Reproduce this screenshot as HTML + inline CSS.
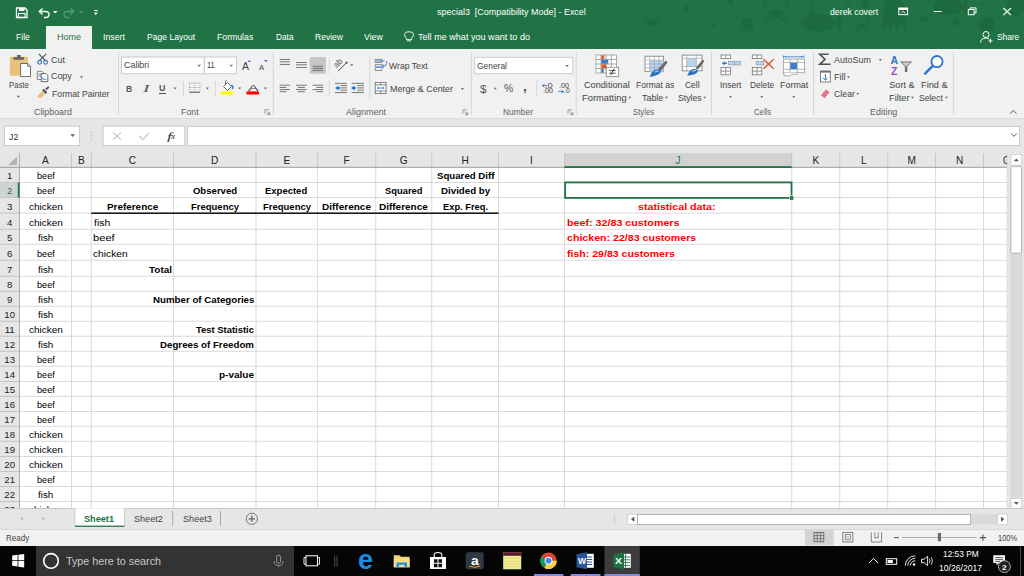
<!DOCTYPE html>
<html><head><meta charset="utf-8"><title>Excel</title>
<style>
html,body{margin:0;padding:0;width:1024px;height:576px;overflow:hidden;background:#fff;font-family:"Liberation Sans",sans-serif}
.r{position:absolute}
.t{position:absolute;white-space:pre;transform-origin:0 0;font-family:"Liberation Sans",sans-serif}
svg{overflow:visible}
</style></head><body>
<div class="r" style="left:0.00px;top:0.00px;width:1024.00px;height:49.00px;background:#217346;"></div>
<div class="r" style="left:0.00px;top:49.00px;width:1024.00px;height:69.00px;background:#f1f1f1;"></div>
<div class="r" style="left:0.00px;top:117.50px;width:1024.00px;height:1.00px;background:#dcdcdc;"></div>
<div class="r" style="left:0.00px;top:118.50px;width:1024.00px;height:34.50px;background:#e6e6e6;"></div>
<div class="r" style="left:0.00px;top:167.00px;width:1024.00px;height:341.50px;background:#ffffff;"></div>
<div class="r" style="left:0.00px;top:508.50px;width:1024.00px;height:20.90px;background:#e6e6e6;"></div>
<div class="r" style="left:0.00px;top:529.40px;width:1024.00px;height:16.60px;background:#f1f1f1;"></div>
<div class="r" style="left:0.00px;top:546.00px;width:1024.00px;height:30.00px;background:#000000;"></div>
<svg class="r" style="left:0;top:0" width="1024" height="576" viewBox="0 0 1024 576"><rect x="0" y="153" width="1007.25" height="14.25" fill="#e6e6e6"/><rect x="0" y="167.25" width="19.4" height="341.25" fill="#e6e6e6"/><rect x="564.5" y="153.2" width="227.25" height="14" fill="#d2d2d2"/><rect x="0" y="182.5" width="19.4" height="15" fill="#d2d2d2"/><rect x="71.00" y="167.25" width="1" height="341.25" fill="#dadada"/><rect x="90.75" y="167.25" width="1" height="341.25" fill="#dadada"/><rect x="173.00" y="167.25" width="1" height="341.25" fill="#dadada"/><rect x="255.50" y="167.25" width="1" height="341.25" fill="#dadada"/><rect x="317.10" y="167.25" width="1" height="341.25" fill="#dadada"/><rect x="375.25" y="167.25" width="1" height="341.25" fill="#dadada"/><rect x="431.25" y="167.25" width="1" height="341.25" fill="#dadada"/><rect x="498.00" y="167.25" width="1" height="341.25" fill="#dadada"/><rect x="564.00" y="167.25" width="1" height="341.25" fill="#dadada"/><rect x="791.25" y="167.25" width="1" height="341.25" fill="#dadada"/><rect x="839.25" y="167.25" width="1" height="341.25" fill="#dadada"/><rect x="887.25" y="167.25" width="1" height="341.25" fill="#dadada"/><rect x="935.10" y="167.25" width="1" height="341.25" fill="#dadada"/><rect x="983.00" y="167.25" width="1" height="341.25" fill="#dadada"/><rect x="19.4" y="182.00" width="987.85" height="1" fill="#dadada"/><rect x="19.4" y="197.00" width="987.85" height="1" fill="#dadada"/><rect x="19.4" y="212.60" width="987.85" height="1" fill="#dadada"/><rect x="19.4" y="228.75" width="987.85" height="1" fill="#dadada"/><rect x="19.4" y="243.75" width="987.85" height="1" fill="#dadada"/><rect x="19.4" y="259.70" width="987.85" height="1" fill="#dadada"/><rect x="19.4" y="275.75" width="987.85" height="1" fill="#dadada"/><rect x="19.4" y="290.90" width="987.85" height="1" fill="#dadada"/><rect x="19.4" y="305.75" width="987.85" height="1" fill="#dadada"/><rect x="19.4" y="320.75" width="987.85" height="1" fill="#dadada"/><rect x="19.4" y="335.75" width="987.85" height="1" fill="#dadada"/><rect x="19.4" y="350.75" width="987.85" height="1" fill="#dadada"/><rect x="19.4" y="365.75" width="987.85" height="1" fill="#dadada"/><rect x="19.4" y="381.00" width="987.85" height="1" fill="#dadada"/><rect x="19.4" y="395.90" width="987.85" height="1" fill="#dadada"/><rect x="19.4" y="411.00" width="987.85" height="1" fill="#dadada"/><rect x="19.4" y="425.75" width="987.85" height="1" fill="#dadada"/><rect x="19.4" y="440.75" width="987.85" height="1" fill="#dadada"/><rect x="19.4" y="456.00" width="987.85" height="1" fill="#dadada"/><rect x="19.4" y="471.00" width="987.85" height="1" fill="#dadada"/><rect x="19.4" y="486.00" width="987.85" height="1" fill="#dadada"/><rect x="19.4" y="501.00" width="987.85" height="1" fill="#dadada"/><rect x="71.00" y="153.2" width="1" height="14" fill="#c4c4c4"/><rect x="90.75" y="153.2" width="1" height="14" fill="#c4c4c4"/><rect x="173.00" y="153.2" width="1" height="14" fill="#c4c4c4"/><rect x="255.50" y="153.2" width="1" height="14" fill="#c4c4c4"/><rect x="317.10" y="153.2" width="1" height="14" fill="#c4c4c4"/><rect x="375.25" y="153.2" width="1" height="14" fill="#c4c4c4"/><rect x="431.25" y="153.2" width="1" height="14" fill="#c4c4c4"/><rect x="498.00" y="153.2" width="1" height="14" fill="#c4c4c4"/><rect x="564.00" y="153.2" width="1" height="14" fill="#c4c4c4"/><rect x="791.25" y="153.2" width="1" height="14" fill="#c4c4c4"/><rect x="839.25" y="153.2" width="1" height="14" fill="#c4c4c4"/><rect x="887.25" y="153.2" width="1" height="14" fill="#c4c4c4"/><rect x="935.10" y="153.2" width="1" height="14" fill="#c4c4c4"/><rect x="983.00" y="153.2" width="1" height="14" fill="#c4c4c4"/><rect x="1006.75" y="153.2" width="1" height="14" fill="#c4c4c4"/><rect x="0" y="182.00" width="19.4" height="1" fill="#c4c4c4"/><rect x="0" y="197.00" width="19.4" height="1" fill="#c4c4c4"/><rect x="0" y="212.60" width="19.4" height="1" fill="#c4c4c4"/><rect x="0" y="228.75" width="19.4" height="1" fill="#c4c4c4"/><rect x="0" y="243.75" width="19.4" height="1" fill="#c4c4c4"/><rect x="0" y="259.70" width="19.4" height="1" fill="#c4c4c4"/><rect x="0" y="275.75" width="19.4" height="1" fill="#c4c4c4"/><rect x="0" y="290.90" width="19.4" height="1" fill="#c4c4c4"/><rect x="0" y="305.75" width="19.4" height="1" fill="#c4c4c4"/><rect x="0" y="320.75" width="19.4" height="1" fill="#c4c4c4"/><rect x="0" y="335.75" width="19.4" height="1" fill="#c4c4c4"/><rect x="0" y="350.75" width="19.4" height="1" fill="#c4c4c4"/><rect x="0" y="365.75" width="19.4" height="1" fill="#c4c4c4"/><rect x="0" y="381.00" width="19.4" height="1" fill="#c4c4c4"/><rect x="0" y="395.90" width="19.4" height="1" fill="#c4c4c4"/><rect x="0" y="411.00" width="19.4" height="1" fill="#c4c4c4"/><rect x="0" y="425.75" width="19.4" height="1" fill="#c4c4c4"/><rect x="0" y="440.75" width="19.4" height="1" fill="#c4c4c4"/><rect x="0" y="456.00" width="19.4" height="1" fill="#c4c4c4"/><rect x="0" y="471.00" width="19.4" height="1" fill="#c4c4c4"/><rect x="0" y="486.00" width="19.4" height="1" fill="#c4c4c4"/><rect x="0" y="501.00" width="19.4" height="1" fill="#c4c4c4"/><rect x="0" y="166.8" width="1007.25" height="1" fill="#9c9c9c"/><rect x="18.9" y="153.2" width="1.1" height="355.30" fill="#b0b0b0"/><rect x="564.5" y="166.2" width="227.25" height="1.8" fill="#217346"/><rect x="17.8" y="182.5" width="1.8" height="15" fill="#217346"/><path d="M8 165 L17 165 L17 156.7 Z" fill="#b4b4b4"/><rect x="1006.75" y="153.2" width="1" height="355.30" fill="#c8c8c8"/><rect x="91.25" y="212.5" width="407.25" height="1.4" fill="#000"/><rect x="565.1" y="182.4" width="226.4" height="15.5" fill="none" stroke="#217346" stroke-width="1.8"/><rect x="789.4" y="195.8" width="4.4" height="4.4" fill="#217346" stroke="#fff" stroke-width="0.7"/></svg>
<div class="r" style="left:0;top:153px;width:1007px;height:355.5px;overflow:hidden"><div class="r" style="left:0;top:-153px;width:1024px;height:576px">
<span class="t" style="left:42.08px;top:156.05px;font-size:10.10px;line-height:10.10px;font-weight:normal;color:#222;">A</span>
<span class="t" style="left:78.01px;top:156.05px;font-size:10.10px;line-height:10.10px;font-weight:normal;color:#222;">B</span>
<span class="t" style="left:128.73px;top:156.05px;font-size:10.10px;line-height:10.10px;font-weight:normal;color:#222;">C</span>
<span class="t" style="left:211.10px;top:156.05px;font-size:10.10px;line-height:10.10px;font-weight:normal;color:#222;">D</span>
<span class="t" style="left:283.43px;top:156.05px;font-size:10.10px;line-height:10.10px;font-weight:normal;color:#222;">E</span>
<span class="t" style="left:343.59px;top:156.05px;font-size:10.10px;line-height:10.10px;font-weight:normal;color:#222;">F</span>
<span class="t" style="left:399.82px;top:156.05px;font-size:10.10px;line-height:10.10px;font-weight:normal;color:#222;">G</span>
<span class="t" style="left:461.48px;top:156.05px;font-size:10.10px;line-height:10.10px;font-weight:normal;color:#222;">H</span>
<span class="t" style="left:530.10px;top:156.05px;font-size:10.10px;line-height:10.10px;font-weight:normal;color:#222;">I</span>
<span class="t" style="left:675.60px;top:156.05px;font-size:10.10px;line-height:10.10px;font-weight:normal;color:#217346;">J</span>
<span class="t" style="left:812.38px;top:156.05px;font-size:10.10px;line-height:10.10px;font-weight:normal;color:#222;">K</span>
<span class="t" style="left:860.94px;top:156.05px;font-size:10.10px;line-height:10.10px;font-weight:normal;color:#222;">L</span>
<span class="t" style="left:907.47px;top:156.05px;font-size:10.10px;line-height:10.10px;font-weight:normal;color:#222;">M</span>
<span class="t" style="left:955.90px;top:156.05px;font-size:10.10px;line-height:10.10px;font-weight:normal;color:#222;">N</span>
<span class="t" style="left:1003.00px;top:156.05px;font-size:10.10px;line-height:10.10px;font-weight:normal;color:#222;transform:scaleX(0.891);">O</span>
<span class="t" style="left:7.03px;top:171.27px;font-size:9.60px;line-height:9.60px;font-weight:normal;color:#222;">1</span>
<span class="t" style="left:7.03px;top:186.27px;font-size:9.60px;line-height:9.60px;font-weight:normal;color:#217346;">2</span>
<span class="t" style="left:7.03px;top:201.87px;font-size:9.60px;line-height:9.60px;font-weight:normal;color:#222;">3</span>
<span class="t" style="left:7.03px;top:218.02px;font-size:9.60px;line-height:9.60px;font-weight:normal;color:#222;">4</span>
<span class="t" style="left:7.03px;top:233.02px;font-size:9.60px;line-height:9.60px;font-weight:normal;color:#222;">5</span>
<span class="t" style="left:7.03px;top:248.97px;font-size:9.60px;line-height:9.60px;font-weight:normal;color:#222;">6</span>
<span class="t" style="left:7.03px;top:265.02px;font-size:9.60px;line-height:9.60px;font-weight:normal;color:#222;">7</span>
<span class="t" style="left:7.03px;top:280.17px;font-size:9.60px;line-height:9.60px;font-weight:normal;color:#222;">8</span>
<span class="t" style="left:7.03px;top:295.02px;font-size:9.60px;line-height:9.60px;font-weight:normal;color:#222;">9</span>
<span class="t" style="left:4.36px;top:310.02px;font-size:9.60px;line-height:9.60px;font-weight:normal;color:#222;">10</span>
<span class="t" style="left:4.72px;top:325.02px;font-size:9.60px;line-height:9.60px;font-weight:normal;color:#222;">11</span>
<span class="t" style="left:4.36px;top:340.02px;font-size:9.60px;line-height:9.60px;font-weight:normal;color:#222;">12</span>
<span class="t" style="left:4.36px;top:355.02px;font-size:9.60px;line-height:9.60px;font-weight:normal;color:#222;">13</span>
<span class="t" style="left:4.36px;top:370.27px;font-size:9.60px;line-height:9.60px;font-weight:normal;color:#222;">14</span>
<span class="t" style="left:4.36px;top:385.17px;font-size:9.60px;line-height:9.60px;font-weight:normal;color:#222;">15</span>
<span class="t" style="left:4.36px;top:400.27px;font-size:9.60px;line-height:9.60px;font-weight:normal;color:#222;">16</span>
<span class="t" style="left:4.36px;top:415.02px;font-size:9.60px;line-height:9.60px;font-weight:normal;color:#222;">17</span>
<span class="t" style="left:4.36px;top:430.02px;font-size:9.60px;line-height:9.60px;font-weight:normal;color:#222;">18</span>
<span class="t" style="left:4.36px;top:445.27px;font-size:9.60px;line-height:9.60px;font-weight:normal;color:#222;">19</span>
<span class="t" style="left:4.36px;top:460.27px;font-size:9.60px;line-height:9.60px;font-weight:normal;color:#222;">20</span>
<span class="t" style="left:4.36px;top:475.27px;font-size:9.60px;line-height:9.60px;font-weight:normal;color:#222;">21</span>
<span class="t" style="left:4.36px;top:490.27px;font-size:9.60px;line-height:9.60px;font-weight:normal;color:#222;">22</span>
<span class="t" style="left:4.36px;top:505.27px;font-size:9.60px;line-height:9.60px;font-weight:normal;color:#222;">23</span>
<span class="t" style="left:36.70px;top:171.27px;font-size:9.60px;line-height:9.60px;font-weight:normal;color:#000;transform:scaleX(0.952);">beef</span>
<span class="t" style="left:36.70px;top:186.27px;font-size:9.60px;line-height:9.60px;font-weight:normal;color:#000;transform:scaleX(0.952);">beef</span>
<span class="t" style="left:28.70px;top:201.87px;font-size:9.60px;line-height:9.60px;font-weight:normal;color:#000;transform:scaleX(1.038);">chicken</span>
<span class="t" style="left:28.70px;top:218.02px;font-size:9.60px;line-height:9.60px;font-weight:normal;color:#000;transform:scaleX(1.038);">chicken</span>
<span class="t" style="left:37.95px;top:233.02px;font-size:9.60px;line-height:9.60px;font-weight:normal;color:#000;transform:scaleX(1.024);">fish</span>
<span class="t" style="left:36.70px;top:248.97px;font-size:9.60px;line-height:9.60px;font-weight:normal;color:#000;transform:scaleX(0.952);">beef</span>
<span class="t" style="left:37.95px;top:265.02px;font-size:9.60px;line-height:9.60px;font-weight:normal;color:#000;transform:scaleX(1.024);">fish</span>
<span class="t" style="left:36.70px;top:280.17px;font-size:9.60px;line-height:9.60px;font-weight:normal;color:#000;transform:scaleX(0.952);">beef</span>
<span class="t" style="left:37.95px;top:295.02px;font-size:9.60px;line-height:9.60px;font-weight:normal;color:#000;transform:scaleX(1.024);">fish</span>
<span class="t" style="left:37.95px;top:310.02px;font-size:9.60px;line-height:9.60px;font-weight:normal;color:#000;transform:scaleX(1.024);">fish</span>
<span class="t" style="left:28.70px;top:325.02px;font-size:9.60px;line-height:9.60px;font-weight:normal;color:#000;transform:scaleX(1.038);">chicken</span>
<span class="t" style="left:37.95px;top:340.02px;font-size:9.60px;line-height:9.60px;font-weight:normal;color:#000;transform:scaleX(1.024);">fish</span>
<span class="t" style="left:36.70px;top:355.02px;font-size:9.60px;line-height:9.60px;font-weight:normal;color:#000;transform:scaleX(0.952);">beef</span>
<span class="t" style="left:36.70px;top:370.27px;font-size:9.60px;line-height:9.60px;font-weight:normal;color:#000;transform:scaleX(0.952);">beef</span>
<span class="t" style="left:36.70px;top:385.17px;font-size:9.60px;line-height:9.60px;font-weight:normal;color:#000;transform:scaleX(0.952);">beef</span>
<span class="t" style="left:36.70px;top:400.27px;font-size:9.60px;line-height:9.60px;font-weight:normal;color:#000;transform:scaleX(0.952);">beef</span>
<span class="t" style="left:36.70px;top:415.02px;font-size:9.60px;line-height:9.60px;font-weight:normal;color:#000;transform:scaleX(0.952);">beef</span>
<span class="t" style="left:28.70px;top:430.02px;font-size:9.60px;line-height:9.60px;font-weight:normal;color:#000;transform:scaleX(1.038);">chicken</span>
<span class="t" style="left:28.70px;top:445.27px;font-size:9.60px;line-height:9.60px;font-weight:normal;color:#000;transform:scaleX(1.038);">chicken</span>
<span class="t" style="left:28.70px;top:460.27px;font-size:9.60px;line-height:9.60px;font-weight:normal;color:#000;transform:scaleX(1.038);">chicken</span>
<span class="t" style="left:36.70px;top:475.27px;font-size:9.60px;line-height:9.60px;font-weight:normal;color:#000;transform:scaleX(0.952);">beef</span>
<span class="t" style="left:37.95px;top:490.27px;font-size:9.60px;line-height:9.60px;font-weight:normal;color:#000;transform:scaleX(1.024);">fish</span>
<span class="t" style="left:28.70px;top:505.27px;font-size:9.60px;line-height:9.60px;font-weight:normal;color:#000;transform:scaleX(1.038);">chicken</span>
<span class="t" style="left:93.75px;top:218.02px;font-size:9.60px;line-height:9.60px;font-weight:normal;color:#000;transform:scaleX(1.088);">fish</span>
<span class="t" style="left:93.25px;top:233.02px;font-size:9.60px;line-height:9.60px;font-weight:normal;color:#000;transform:scaleX(1.163);">beef</span>
<span class="t" style="left:93.25px;top:248.97px;font-size:9.60px;line-height:9.60px;font-weight:normal;color:#000;transform:scaleX(1.067);">chicken</span>
<span class="t" style="left:106.90px;top:201.87px;font-size:9.60px;line-height:9.60px;font-weight:bold;color:#000;transform:scaleX(1.032);">Preference</span>
<span class="t" style="left:148.75px;top:265.02px;font-size:9.60px;line-height:9.60px;font-weight:bold;color:#000;transform:scaleX(1.035);">Total</span>
<span class="t" style="left:152.50px;top:295.02px;font-size:9.60px;line-height:9.60px;font-weight:bold;color:#000;transform:scaleX(1.012);">Number of Categories</span>
<span class="t" style="left:196.00px;top:325.02px;font-size:9.60px;line-height:9.60px;font-weight:bold;color:#000;transform:scaleX(0.982);">Test Statistic</span>
<span class="t" style="left:160.00px;top:340.02px;font-size:9.60px;line-height:9.60px;font-weight:bold;color:#000;transform:scaleX(1.013);">Degrees of Freedom</span>
<span class="t" style="left:219.25px;top:370.27px;font-size:9.60px;line-height:9.60px;font-weight:bold;color:#000;transform:scaleX(1.041);">p-value</span>
<span class="t" style="left:192.90px;top:186.27px;font-size:9.60px;line-height:9.60px;font-weight:bold;color:#000;">Observed</span>
<span class="t" style="left:265.40px;top:186.27px;font-size:9.60px;line-height:9.60px;font-weight:bold;color:#000;transform:scaleX(0.989);">Expected</span>
<span class="t" style="left:190.80px;top:201.87px;font-size:9.60px;line-height:9.60px;font-weight:bold;color:#000;transform:scaleX(0.989);">Frequency</span>
<span class="t" style="left:262.70px;top:201.87px;font-size:9.60px;line-height:9.60px;font-weight:bold;color:#000;transform:scaleX(0.989);">Frequency</span>
<span class="t" style="left:436.50px;top:171.27px;font-size:9.60px;line-height:9.60px;font-weight:bold;color:#000;transform:scaleX(1.007);">Squared Diff</span>
<span class="t" style="left:441.00px;top:186.27px;font-size:9.60px;line-height:9.60px;font-weight:bold;color:#000;transform:scaleX(1.014);">Divided by</span>
<span class="t" style="left:443.00px;top:201.87px;font-size:9.60px;line-height:9.60px;font-weight:bold;color:#000;transform:scaleX(0.970);">Exp. Freq.</span>
<span class="t" style="left:384.75px;top:186.27px;font-size:9.60px;line-height:9.60px;font-weight:bold;color:#000;transform:scaleX(0.976);">Squared</span>
<span class="t" style="left:321.50px;top:201.87px;font-size:9.60px;line-height:9.60px;font-weight:bold;color:#000;transform:scaleX(1.044);">Difference</span>
<span class="t" style="left:379.00px;top:201.87px;font-size:9.60px;line-height:9.60px;font-weight:bold;color:#000;transform:scaleX(1.038);">Difference</span>
<span class="t" style="left:638.25px;top:201.87px;font-size:9.60px;line-height:9.60px;font-weight:bold;color:#ff0000;transform:scaleX(1.109);">statistical data:</span>
<span class="t" style="left:567.00px;top:218.02px;font-size:9.60px;line-height:9.60px;font-weight:bold;color:#ff0000;transform:scaleX(1.116);">beef: 32/83 customers</span>
<span class="t" style="left:567.00px;top:233.02px;font-size:9.60px;line-height:9.60px;font-weight:bold;color:#ff0000;transform:scaleX(1.106);">chicken: 22/83 customers</span>
<span class="t" style="left:567.00px;top:248.97px;font-size:9.60px;line-height:9.60px;font-weight:bold;color:#ff0000;transform:scaleX(1.100);">fish: 29/83 customers</span>
</div></div>
<svg class="r" style="left:0;top:0" width="1024" height="49" viewBox="0 0 1024 49"><circle cx="686.9" cy="8.8" r="3.0" fill="#1e6a40"/><circle cx="713.1" cy="24.8" r="2.0" fill="#1e6a40"/><circle cx="730.4" cy="1.0" r="3.5" fill="#1e6a40"/><circle cx="752.0" cy="8.8" r="1.8" fill="#1e6a40"/><circle cx="848.0" cy="4.4" r="2.0" fill="#1e6a40"/><circle cx="865.6" cy="3.3" r="3.5" fill="#1e6a40"/><circle cx="956.4" cy="21.9" r="3.5" fill="#1e6a40"/><circle cx="981.6" cy="3.9" r="1.5" fill="#1e6a40"/><circle cx="986.5" cy="25.0" r="8.0" fill="#1e6a40"/><ellipse cx="747" cy="24" rx="5.5" ry="6" fill="#1e6a40"/><path d="M742 28 Q740 33 742 34 M745 29 L744 34 M749 29 L750 34 M752 28 Q754 33 752 34" stroke="#1e6a40" stroke-width="1.6" fill="none"/><g transform="translate(652.0 22.0) scale(0.60)" fill="none" stroke="#1e6a40" stroke-width="2"><ellipse cx="0" cy="0" rx="7" ry="5" fill="#1e6a40" stroke="none"/><path d="M-6 -2 L-12 -8 L-10 -14 M-12 -8 L-15 -11 M6 -2 L12 -8 L10 -14 M12 -8 L15 -11 M-6 2 L-13 4 M-5 4 L-10 9 M6 2 L13 4 M5 4 L10 9"/></g><g transform="translate(776.0 14.0) scale(0.95)" fill="none" stroke="#1e6a40" stroke-width="2"><ellipse cx="0" cy="0" rx="7" ry="5" fill="#1e6a40" stroke="none"/><path d="M-6 -2 L-12 -8 L-10 -14 M-12 -8 L-15 -11 M6 -2 L12 -8 L10 -14 M12 -8 L15 -11 M-6 2 L-13 4 M-5 4 L-10 9 M6 2 L13 4 M5 4 L10 9"/></g><g transform="translate(862.0 26.0) scale(0.55)" fill="none" stroke="#1e6a40" stroke-width="2"><ellipse cx="0" cy="0" rx="7" ry="5" fill="#1e6a40" stroke="none"/><path d="M-6 -2 L-12 -8 L-10 -14 M-12 -8 L-15 -11 M6 -2 L12 -8 L10 -14 M12 -8 L15 -11 M-6 2 L-13 4 M-5 4 L-10 9 M6 2 L13 4 M5 4 L10 9"/></g><g transform="translate(924.0 19.0) scale(0.50)" fill="none" stroke="#1e6a40" stroke-width="2"><ellipse cx="0" cy="0" rx="7" ry="5" fill="#1e6a40" stroke="none"/><path d="M-6 -2 L-12 -8 L-10 -14 M-12 -8 L-15 -11 M6 -2 L12 -8 L10 -14 M12 -8 L15 -11 M-6 2 L-13 4 M-5 4 L-10 9 M6 2 L13 4 M5 4 L10 9"/></g><ellipse cx="818" cy="22.5" rx="17" ry="9" fill="#1e6a40"/><rect x="808" y="12" width="9" height="6" fill="#1e6a40"/><path d="M812 12 L812 5 Q812 2 815 3" stroke="#1e6a40" stroke-width="2" fill="none"/><path d="M836 18 L841 14 L841 31 L836 27 Z" fill="#1e6a40"/><ellipse cx="894" cy="9" rx="10.5" ry="12.5" fill="#1e6a40"/><path d="M884.5 16 Q880 24 882.5 31 Q885.5 25 889 22 Q888 28 890 33 Q892.5 27 894 23 Q895.5 27 898 33 Q900 28 899 22 Q902.5 25 905.5 31 Q908 24 903.5 16 Z" fill="#1e6a40"/><ellipse cx="948" cy="7" rx="14" ry="8" fill="#1e6a40"/><path d="M960 7 L967 0 L967 15 Z" fill="#1e6a40"/><ellipse cx="1016" cy="6" rx="9" ry="10" fill="#1e6a40"/></svg>
<div class="r" style="left:46.25px;top:26.00px;width:45.25px;height:23.00px;background:#f1f1f1;"></div>
<svg class="r" style="left:0;top:0" width="1024" height="49" viewBox="0 0 1024 49"><path d="M16.5 8 H25 L27 10 V17.5 H16.5 Z" fill="none" stroke="#fff" stroke-width="1.3"/><rect x="19" y="8" width="5.5" height="3" fill="#fff"/><rect x="18.5" y="13.5" width="6.5" height="4" fill="none" stroke="#fff" stroke-width="1.1"/><path d="M40 11.5 H45.5 Q49 11.5 49 14.5 Q49 17.5 45.5 17.5 H44" fill="none" stroke="#fff" stroke-width="1.3"/><path d="M42.5 8.5 L39.3 11.5 L42.5 14.5" fill="none" stroke="#fff" stroke-width="1.3"/><path d="M53 11 H57.5 L55.25 13.5 Z" fill="#fff"/><path d="M73 11.5 H67.5 Q64 11.5 64 14.5 Q64 17.5 67.5 17.5 H69" fill="none" stroke="#5a9a74" stroke-width="1.3"/><path d="M70.5 8.5 L73.7 11.5 L70.5 14.5" fill="none" stroke="#5a9a74" stroke-width="1.3"/><path d="M79 11 H83 L81 13.3 Z" fill="#5a9a74"/><rect x="94" y="10" width="3.6" height="1" fill="#fff"/><path d="M94 12.5 H97.6 L95.8 15.3 Z" fill="#fff"/><rect x="898.8" y="8" width="8.8" height="6.6" fill="none" stroke="#fff" stroke-width="1"/><rect x="898.8" y="8" width="8.8" height="2" fill="#fff"/><path d="M901.5 13 L903.2 11.2 L904.9 13" fill="none" stroke="#fff" stroke-width="0.9"/><rect x="933.8" y="11" width="7.8" height="1" fill="#fff"/><rect x="968.3" y="9.5" width="5.8" height="5.2" fill="none" stroke="#fff" stroke-width="1"/><path d="M970 9.5 V7.9 H976 V13 H974" fill="none" stroke="#fff" stroke-width="1"/><path d="M1003.3 8 L1011 15.2 M1011 8 L1003.3 15.2" stroke="#fff" stroke-width="1.1"/><path d="M406.3 38.2 Q404.6 36.2 404.6 34.6 Q404.6 31.8 409 31.8 Q413.4 31.8 413.4 34.6 Q413.4 36.2 411.7 38.2 V39.6 H406.3 Z" fill="none" stroke="#fff" stroke-width="0.9"/><rect x="407" y="40.4" width="4" height="0.9" fill="#fff"/><circle cx="986" cy="34.5" r="3" fill="none" stroke="#fff" stroke-width="1"/><path d="M980.5 42.5 Q981 38 986 38 Q988 38 989.2 39" fill="none" stroke="#fff" stroke-width="1"/><path d="M988.5 40.8 H992.5 M990.5 38.8 V42.8" stroke="#fff" stroke-width="1"/></svg>
<span class="t" style="left:436.50px;top:7.98px;font-size:9.00px;line-height:9.00px;font-weight:normal;color:#ffffff;transform:scaleX(0.995);">special3  [Compatibility Mode] - Excel</span>
<span class="t" style="left:829.80px;top:7.98px;font-size:9.00px;line-height:9.00px;font-weight:normal;color:#ffffff;transform:scaleX(0.973);">derek covert</span>
<span class="t" style="left:15.60px;top:33.32px;font-size:9.30px;line-height:9.30px;font-weight:normal;color:#ffffff;transform:scaleX(0.921);">File</span>
<span class="t" style="left:56.90px;top:33.32px;font-size:9.30px;line-height:9.30px;font-weight:normal;color:#217346;transform:scaleX(0.971);">Home</span>
<span class="t" style="left:102.50px;top:33.32px;font-size:9.30px;line-height:9.30px;font-weight:normal;color:#ffffff;transform:scaleX(0.942);">Insert</span>
<span class="t" style="left:146.75px;top:33.32px;font-size:9.30px;line-height:9.30px;font-weight:normal;color:#ffffff;transform:scaleX(0.924);">Page Layout</span>
<span class="t" style="left:216.75px;top:33.32px;font-size:9.30px;line-height:9.30px;font-weight:normal;color:#ffffff;transform:scaleX(0.935);">Formulas</span>
<span class="t" style="left:275.50px;top:33.32px;font-size:9.30px;line-height:9.30px;font-weight:normal;color:#ffffff;transform:scaleX(0.891);">Data</span>
<span class="t" style="left:315.00px;top:33.32px;font-size:9.30px;line-height:9.30px;font-weight:normal;color:#ffffff;transform:scaleX(0.917);">Review</span>
<span class="t" style="left:364.25px;top:33.32px;font-size:9.30px;line-height:9.30px;font-weight:normal;color:#ffffff;transform:scaleX(0.937);">View</span>
<span class="t" style="left:418.25px;top:33.32px;font-size:9.30px;line-height:9.30px;font-weight:normal;color:#ffffff;transform:scaleX(0.976);">Tell me what you want to do</span>
<span class="t" style="left:996.80px;top:33.32px;font-size:9.30px;line-height:9.30px;font-weight:normal;color:#ffffff;transform:scaleX(0.895);">Share</span>

<svg class="r" style="left:0;top:0" width="1024" height="120" viewBox="0 0 1024 120"><rect x="118.00" y="51.80" width="1" height="62.70" fill="#d6d6d6"/><rect x="272.80" y="51.80" width="1" height="62.70" fill="#d6d6d6"/><rect x="471.10" y="51.80" width="1" height="62.70" fill="#d6d6d6"/><rect x="575.70" y="51.80" width="1" height="62.70" fill="#d6d6d6"/><rect x="711.00" y="51.80" width="1" height="62.70" fill="#d6d6d6"/><rect x="813.00" y="51.80" width="1" height="62.70" fill="#d6d6d6"/><rect x="952.90" y="51.80" width="1" height="62.70" fill="#d6d6d6"/><rect x="9.9" y="56.8" width="18" height="19" rx="1" fill="#e8c27d"/><rect x="13.5" y="57.2" width="10.4" height="2.5" fill="#5f5f5f"/><rect x="17.1" y="55" width="3.6" height="2.4" fill="#5f5f5f"/><path d="M20.6 63.5 H27.8 L30.5 66.2 V76.5 H20.6 Z" fill="#fff" stroke="#5f5f5f" stroke-width="0.9"/><path d="M27.6 63.5 V66.4 H30.5" fill="none" stroke="#5f5f5f" stroke-width="0.8"/><path d="M16.60 95.80 H20.20 L18.40 97.80 Z" fill="#6b6b6b"/><path d="M79.90 76.20 H83.10 L81.50 78.20 Z" fill="#6b6b6b"/><path d="M38.8 53.8 L45.8 60.8 M46.2 53.8 L39.2 60.8" stroke="#505050" stroke-width="1.1"/><circle cx="39.6" cy="62.3" r="1.9" fill="none" stroke="#2e75c8" stroke-width="1.1"/><circle cx="45.6" cy="62.3" r="1.9" fill="none" stroke="#2e75c8" stroke-width="1.1"/><path d="M37.3 71.3 H42 L43.5 72.8 V79.5 H37.3 Z" fill="#f4f4f4" stroke="#6a6a6a" stroke-width="0.8"/><path d="M38.5 74 H41.5 M38.5 76 H41.5" stroke="#2e75c8" stroke-width="0.8"/><path d="M41.2 73.6 H46 L47.8 75.4 V81.6 H41.2 Z" fill="#fff" stroke="#5a5a5a" stroke-width="0.9"/><path d="M42.8 77 V79.3 H46.5" fill="none" stroke="#2e75c8" stroke-width="0.8"/><path d="M37.2 96.3 L41.8 91.2 L45 94.3 L40 98.8 Z" fill="#e8c27d"/><path d="M42 90.5 L45.6 94 L47.3 92.3 L43.7 88.8 Z" fill="#555"/><path d="M45.8 89.5 L48.8 86.8" stroke="#555" stroke-width="1.8"/><rect x="121.5" y="57" width="82.8" height="16.75" fill="#fff" stroke="#c6c6c6" stroke-width="0.9"/><rect x="204.3" y="57" width="32.3" height="16.75" fill="#fff" stroke="#c6c6c6" stroke-width="0.9"/><path d="M197.40 64.70 H201.00 L199.20 66.70 Z" fill="#6b6b6b"/><path d="M229.50 64.70 H233.10 L231.30 66.70 Z" fill="#6b6b6b"/><path d="M247.5 62 L249.25 59.9 L251 62 Z" fill="#2e75c8"/><path d="M263.9 59.9 H267.8 L265.85 62 Z" fill="#2e75c8"/><path d="M173.40 87.60 H176.60 L175.00 89.60 Z" fill="#6b6b6b"/><rect x="183.00" y="80.50" width="1" height="16.10" fill="#d8d8d8"/><path d="M189.5 83 H200 M189.5 87.5 H200 M189.5 83 V92 M194.75 83 V92 M200 83 V92" stroke="#9a9a9a" stroke-width="0.8" stroke-dasharray="1 1"/><rect x="189.4" y="91.7" width="10.6" height="1" fill="#4a4a4a"/><path d="M205.80 87.60 H209.00 L207.40 89.60 Z" fill="#6b6b6b"/><rect x="215.00" y="80.50" width="1" height="16.10" fill="#d8d8d8"/><path d="M223.5 86.5 L227.5 82.5 L231.5 86.5 L227.5 90.5 Z" fill="#fff" stroke="#555" stroke-width="0.9"/><path d="M225.5 84.5 V81.5 Q225.5 80.5 226.5 80.5" fill="none" stroke="#555" stroke-width="0.9"/><path d="M231.5 85 Q233.5 86.5 232.5 89" fill="none" stroke="#2e75c8" stroke-width="1.4"/><rect x="221" y="91.4" width="12.2" height="3.1" fill="#ffff00"/><path d="M238.00 87.60 H241.20 L239.60 89.60 Z" fill="#6b6b6b"/><rect x="246.5" y="91.4" width="12.5" height="3.1" fill="#ff0000"/><path d="M263.90 87.60 H267.10 L265.50 89.60 Z" fill="#6b6b6b"/><path d="M264.8 113.8 V109.6 H269.0" fill="none" stroke="#8c8c8c" stroke-width="0.8"/><path d="M266.4 111.2 L269.7 114.5" stroke="#8c8c8c" stroke-width="0.9"/><path d="M269.7 111.8 V114.5 H267.0" fill="none" stroke="#8c8c8c" stroke-width="0.9"/><rect x="309.8" y="57.1" width="16.1" height="16.7" fill="#c6c6c6"/><rect x="279.70" y="58.95" width="10.30" height="0.90" fill="#6a6a6a"/><rect x="279.70" y="61.35" width="10.30" height="0.90" fill="#6a6a6a"/><rect x="279.70" y="63.95" width="10.30" height="0.90" fill="#6a6a6a"/><rect x="296.00" y="62.05" width="10.80" height="0.90" fill="#6a6a6a"/><rect x="296.00" y="64.35" width="10.80" height="0.90" fill="#6a6a6a"/><rect x="296.00" y="66.95" width="10.80" height="0.90" fill="#6a6a6a"/><rect x="312.70" y="65.85" width="10.30" height="0.90" fill="#6a6a6a"/><rect x="312.70" y="67.95" width="10.30" height="0.90" fill="#6a6a6a"/><rect x="312.70" y="70.05" width="10.30" height="0.90" fill="#6a6a6a"/><rect x="328.80" y="57.20" width="1" height="16.30" fill="#d8d8d8"/><text x="0" y="0" transform="translate(336.6 68.2) rotate(-45)" font-family="Liberation Sans" font-size="8.2" fill="#505050">ab</text><path d="M338 71.2 L346.2 63" stroke="#505050" stroke-width="1"/><circle cx="346.6" cy="62.6" r="1.1" fill="#505050"/><path d="M350.20 64.30 H353.40 L351.80 66.30 Z" fill="#6b6b6b"/><rect x="369.20" y="57.20" width="1" height="40.80" fill="#d8d8d8"/><rect x="279.70" y="84.75" width="10.30" height="0.90" fill="#6a6a6a"/><rect x="279.70" y="86.95" width="6.69" height="0.90" fill="#6a6a6a"/><rect x="279.70" y="89.15" width="10.30" height="0.90" fill="#6a6a6a"/><rect x="279.70" y="91.25" width="6.69" height="0.90" fill="#6a6a6a"/><rect x="296.00" y="84.75" width="10.80" height="0.90" fill="#6a6a6a"/><rect x="297.89" y="86.95" width="7.02" height="0.90" fill="#6a6a6a"/><rect x="296.00" y="89.15" width="10.80" height="0.90" fill="#6a6a6a"/><rect x="297.89" y="91.25" width="7.02" height="0.90" fill="#6a6a6a"/><rect x="312.60" y="84.75" width="10.60" height="0.90" fill="#6a6a6a"/><rect x="316.31" y="86.95" width="6.89" height="0.90" fill="#6a6a6a"/><rect x="312.60" y="89.15" width="10.60" height="0.90" fill="#6a6a6a"/><rect x="316.31" y="91.25" width="6.89" height="0.90" fill="#6a6a6a"/><rect x="328.80" y="80.00" width="1" height="16.60" fill="#d8d8d8"/><rect x="335.00" y="82.85" width="12.00" height="0.90" fill="#6a6a6a"/><rect x="335.00" y="92.15" width="12.00" height="0.90" fill="#6a6a6a"/><rect x="340.50" y="85.15" width="6.50" height="0.90" fill="#6a6a6a"/><rect x="340.50" y="87.45" width="6.50" height="0.90" fill="#6a6a6a"/><rect x="340.50" y="89.75" width="6.50" height="0.90" fill="#6a6a6a"/><path d="M335.3 87.9 L338.3 85.4 V86.9 H340 V88.9 H338.3 V90.4 Z" fill="#2e75c8"/><rect x="351.70" y="82.85" width="12.20" height="0.90" fill="#6a6a6a"/><rect x="351.70" y="92.15" width="12.20" height="0.90" fill="#6a6a6a"/><rect x="357.20" y="85.15" width="6.70" height="0.90" fill="#6a6a6a"/><rect x="357.20" y="87.45" width="6.70" height="0.90" fill="#6a6a6a"/><rect x="357.20" y="89.75" width="6.70" height="0.90" fill="#6a6a6a"/><path d="M356.3 87.9 L353.3 85.4 V86.9 H351.6 V88.9 H353.3 V90.4 Z" fill="#2e75c8"/><rect x="375.2" y="59.3" width="6.7" height="3.2" fill="none" stroke="#777" stroke-width="0.8"/><rect x="376" y="60.5" width="8.5" height="0.9" fill="#2e75c8"/><rect x="375.2" y="64.7" width="6.7" height="5.7" fill="none" stroke="#777" stroke-width="0.8"/><rect x="376" y="66.5" width="5.5" height="1.2" fill="#2e75c8"/><path d="M386.8 61.2 Q387.2 66.2 382.6 66.2" fill="none" stroke="#2e75c8" stroke-width="1"/><path d="M384 64.6 L382.2 66.2 L384 67.8" fill="none" stroke="#2e75c8" stroke-width="0.9"/><rect x="375.2" y="82.4" width="10.8" height="11.2" fill="#fff" stroke="#666" stroke-width="0.8"/><path d="M375.2 84.9 H386 M375.2 91 H386 M380.6 82.4 V84.9 M380.6 91 V93.6" stroke="#666" stroke-width="0.8"/><path d="M377 88 H384.2" stroke="#2e75c8" stroke-width="0.8"/><path d="M377 88 L378.5 86.8 V89.2 Z M384.2 88 L382.7 86.8 V89.2 Z" fill="#2e75c8"/><path d="M460.80 88.10 H464.00 L462.40 90.10 Z" fill="#6b6b6b"/><path d="M462.8 114.0 V109.8 H467.0" fill="none" stroke="#8c8c8c" stroke-width="0.8"/><path d="M464.4 111.4 L467.7 114.7" stroke="#8c8c8c" stroke-width="0.9"/><path d="M467.7 112.0 V114.7 H465.0" fill="none" stroke="#8c8c8c" stroke-width="0.9"/><rect x="474.7" y="57.3" width="98.1" height="16.4" fill="#fff" stroke="#c6c6c6" stroke-width="0.9"/><path d="M565.30 64.90 H568.90 L567.10 66.90 Z" fill="#6b6b6b"/><path d="M493.70 87.80 H496.90 L495.30 89.80 Z" fill="#6b6b6b"/><rect x="536.20" y="80.40" width="1" height="15.80" fill="#d8d8d8"/><path d="M542.5 85.6 L544.5 84 M542.5 85.6 L544.5 87.2 M542.5 85.6 H547" stroke="#2e75c8" stroke-width="0.9" fill="none"/><path d="M558.5 91.6 H563.5 M563.5 91.6 L561.5 90 M563.5 91.6 L561.5 93.2" stroke="#2e75c8" stroke-width="0.9" fill="none"/><path d="M568.0 114.0 V109.8 H572.2" fill="none" stroke="#8c8c8c" stroke-width="0.8"/><path d="M569.6 111.4 L572.9 114.7" stroke="#8c8c8c" stroke-width="0.9"/><path d="M572.9 112.0 V114.7 H570.2" fill="none" stroke="#8c8c8c" stroke-width="0.9"/><g stroke="#8a8a8a" stroke-width="0.7" fill="#fff"><rect x="596" y="55" width="20.5" height="18" /></g><path d="M596 59.5 H616.5 M596 64 H616.5 M596 68.5 H616.5 M601 55 V73 M606 55 V73 M611.3 55 V73" stroke="#888" stroke-width="0.7"/><rect x="601.3" y="55.3" width="3" height="3.9" fill="#e4592a"/><rect x="601.3" y="59.8" width="7" height="3.9" fill="#3c7dc4"/><rect x="601.3" y="64.3" width="5" height="3.9" fill="#e4592a"/><rect x="601.3" y="68.8" width="2.5" height="3.9" fill="#3c7dc4"/><rect x="606.3" y="67.3" width="12.4" height="9.4" fill="#fff" stroke="#888" stroke-width="0.8"/><path d="M609.2 70.6 H615.6 M609.2 73.2 H615.6 M614.2 68.6 L610.6 75.2" stroke="#333" stroke-width="0.9"/><rect x="645" y="56.2" width="18.6" height="15.5" fill="#fff" stroke="#777" stroke-width="0.8"/><rect x="649.8" y="60.4" width="13.8" height="11.3" fill="#bcd3ec"/><path d="M645 60.2 H663.6 M645 64 H663.6 M645 67.8 H663.6 M649.8 56.2 V71.7 M654.4 56.2 V71.7 M659 56.2 V71.7" stroke="#8f9fb2" stroke-width="0.6"/><path d="M657.8 69.3 L665.8 60.6 L667.6 62.4 L660.6 71.2 Z" fill="#6a6a6a"/><path d="M649.6 77 Q651.2 71.6 655.8 69.6 Q659 69.2 660.9 71.6 Q660.4 75.6 649.6 77 Z" fill="#2f72c2"/><path d="M655 72.2 Q656.5 70.8 658.2 71.4" fill="none" stroke="#fff" stroke-width="0.9"/><rect x="682.2" y="55.1" width="19.8" height="15.8" fill="#fff" stroke="#777" stroke-width="0.8"/><rect x="686.7" y="58.3" width="9.6" height="8.2" fill="#bcd3ec"/><path d="M682.2 58.3 H702 M682.2 66.5 H702 M686.7 55.1 V70.9 M696.3 55.1 V70.9" stroke="#999" stroke-width="0.6"/><path d="M695.6 68 L702.6 59.4 L704.4 61 L698.2 69.6 Z" fill="#6a6a6a"/><path d="M687.2 75.8 Q688.8 70.6 693.2 68.9 Q696.4 68.5 698 70.8 Q697.6 74.6 687.2 75.8 Z" fill="#2f72c2"/><path d="M692.5 71.4 Q694 70 695.6 70.6" fill="none" stroke="#fff" stroke-width="0.9"/><path d="M628.20 96.70 H631.20 L629.70 98.70 Z" fill="#6b6b6b"/><path d="M665.10 96.70 H668.10 L666.60 98.70 Z" fill="#6b6b6b"/><path d="M703.10 96.70 H706.10 L704.60 98.70 Z" fill="#6b6b6b"/><rect x="721" y="55" width="9.5" height="3.6" fill="#fff" stroke="#777" stroke-width="0.8"/><path d="M725.75 55 V58.6" stroke="#777" stroke-width="0.8"/><rect x="728.5" y="61.6" width="12" height="3.3" fill="#bcd3ec" stroke="#8a9ab0" stroke-width="0.7"/><path d="M734.5 61.6 V64.9" stroke="#8a9ab0" stroke-width="0.7"/><path d="M722 63.25 L724.6 61.3 V62.5 H726.8 V64 H724.6 V65.2 Z" fill="#2e75c8"/><rect x="721" y="67.5" width="9.5" height="7.3" fill="#fff" stroke="#777" stroke-width="0.8"/><path d="M725.75 67.5 V74.8 M721 71.15 H730.5" stroke="#777" stroke-width="0.8"/><path d="M729.00 95.90 H732.00 L730.50 97.90 Z" fill="#6b6b6b"/><rect x="752.3" y="55" width="9.5" height="3.6" fill="#fff" stroke="#777" stroke-width="0.8"/><path d="M757 55 V58.6" stroke="#777" stroke-width="0.8"/><rect x="756.3" y="61.6" width="7.5" height="3.3" fill="#bcd3ec" stroke="#8a9ab0" stroke-width="0.7"/><rect x="752.3" y="67.5" width="9.5" height="7.3" fill="#fff" stroke="#777" stroke-width="0.8"/><path d="M757 67.5 V74.8 M752.3 71.15 H761.8" stroke="#777" stroke-width="0.8"/><path d="M763.5 59.3 L773.8 68.8 M773.8 59.3 L763.5 68.8" stroke="#d9512c" stroke-width="1.3"/><path d="M760.30 95.90 H763.30 L761.80 97.90 Z" fill="#6b6b6b"/><path d="M783.5 55.5 V58 M803.8 55.5 V58 M784.5 56.8 H802.8" stroke="#2e75c8" stroke-width="0.8"/><path d="M784.5 56.8 L786 55.8 V57.8 Z M802.8 56.8 L801.3 55.8 V57.8 Z" fill="#2e75c8"/><rect x="783.3" y="59.1" width="21" height="13.7" fill="#fff" stroke="#8a8a8a" stroke-width="0.7"/><path d="M783.3 62.4 H804.3 M783.3 69.3 H804.3 M790 59.1 V72.8 M797.3 59.1 V72.8" stroke="#9a9a9a" stroke-width="0.7"/><rect x="790.3" y="62.8" width="6.7" height="6.2" fill="#3c7dc4"/><path d="M784 72.8 V75.8 H790 L791.5 74.3 H797 V72.8" fill="#fff" stroke="#8a8a8a" stroke-width="0.7"/><path d="M792.30 95.90 H795.30 L793.80 97.90 Z" fill="#6b6b6b"/><path d="M828.6 54.3 H819.8 L825 59.3 L819.8 64.3 H830.5" fill="none" stroke="#505050" stroke-width="1.6"/><path d="M878.80 59.10 H881.80 L880.30 61.10 Z" fill="#6b6b6b"/><rect x="820.5" y="71" width="9.8" height="11" fill="#fff" stroke="#707070" stroke-width="0.9"/><rect x="820.5" y="71" width="9.8" height="1.6" fill="#707070"/><path d="M825.4 74 V80 M823 77.8 L825.4 80.2 L827.8 77.8" fill="none" stroke="#2e75c8" stroke-width="1"/><path d="M847.00 76.20 H850.00 L848.50 78.20 Z" fill="#6b6b6b"/><path d="M821 95.3 L826 89.3 L829.5 92.3 L824.5 98.3 Z" fill="#e9718a"/><path d="M856.30 93.10 H859.30 L857.80 95.10 Z" fill="#6b6b6b"/><text x="890.6" y="63.9" font-family="Liberation Sans" font-weight="bold" font-size="10.5" fill="#2e75c8">A</text><text x="891" y="74.9" font-family="Liberation Sans" font-weight="bold" font-size="10.5" fill="#8e4ec6">Z</text><path d="M899.9 61.5 H912.3 L907.3 66.5 V72 H904.9 V66.5 Z" fill="#6f6f6f"/><path d="M901.8 62.6 H910.4 L906.1 66.4 Z" fill="#cfcfcf"/><path d="M911.00 96.70 H914.00 L912.50 98.70 Z" fill="#6b6b6b"/><circle cx="937" cy="61.6" r="5.6" fill="#fff" stroke="#2e75c8" stroke-width="1.8"/><path d="M932.8 65.8 L925 73.6" stroke="#2e75c8" stroke-width="2.4" stroke-linecap="round"/><path d="M944.90 96.70 H947.90 L946.40 98.70 Z" fill="#6b6b6b"/><path d="M1010.2 113.6 L1013.3 110.4 L1016.4 113.6" fill="none" stroke="#555" stroke-width="1"/></svg>
<span class="t" style="left:9.00px;top:81.29px;font-size:9.10px;line-height:9.10px;font-weight:normal;color:#444444;transform:scaleX(0.851);">Paste</span>
<span class="t" style="left:51.20px;top:55.69px;font-size:9.10px;line-height:9.10px;font-weight:normal;color:#444444;transform:scaleX(0.982);">Cut</span>
<span class="t" style="left:51.25px;top:72.49px;font-size:9.10px;line-height:9.10px;font-weight:normal;color:#444444;transform:scaleX(0.972);">Copy</span>
<span class="t" style="left:51.75px;top:89.89px;font-size:9.10px;line-height:9.10px;font-weight:normal;color:#444444;transform:scaleX(0.955);">Format Painter</span>
<span class="t" style="left:33.90px;top:107.89px;font-size:9.10px;line-height:9.10px;font-weight:normal;color:#5e5e5e;transform:scaleX(0.972);">Clipboard</span>
<span class="t" style="left:123.80px;top:61.49px;font-size:9.10px;line-height:9.10px;font-weight:normal;color:#444444;transform:scaleX(0.981);">Calibri</span>
<span class="t" style="left:207.40px;top:61.49px;font-size:9.10px;line-height:9.10px;font-weight:normal;color:#444444;transform:scaleX(0.826);">11</span>
<span class="t" style="left:241.50px;top:61.76px;font-size:10.20px;line-height:10.20px;font-weight:normal;color:#444444;transform:scaleX(1.029);">A</span>
<span class="t" style="left:258.90px;top:63.96px;font-size:7.60px;line-height:7.60px;font-weight:normal;color:#444444;transform:scaleX(1.026);">A</span>
<span class="t" style="left:126.20px;top:84.98px;font-size:9.00px;line-height:9.00px;font-weight:bold;color:#555;transform:scaleX(0.954);">B</span>
<span class="t" style="left:143.20px;top:84.47px;font-size:9.60px;line-height:9.60px;font-weight:normal;color:#555;transform:scaleX(2.023);font-style:italic;font-family:'Liberation Serif',serif;">I</span>
<span class="t" style="left:159.30px;top:83.98px;font-size:9.00px;line-height:9.00px;font-weight:bold;color:#555;transform:scaleX(0.985);">U</span>
<div class="r" style="left:159.00px;top:93.40px;width:7.00px;height:0.90px;background:#555;"></div>
<span class="t" style="left:247.50px;top:82.97px;font-size:9.60px;line-height:9.60px;font-weight:normal;color:#444;transform:scaleX(1.640);">A</span>
<span class="t" style="left:180.80px;top:107.89px;font-size:9.10px;line-height:9.10px;font-weight:normal;color:#5e5e5e;transform:scaleX(0.972);">Font</span>
<span class="t" style="left:389.20px;top:61.59px;font-size:9.10px;line-height:9.10px;font-weight:normal;color:#444444;transform:scaleX(0.952);">Wrap Text</span>
<span class="t" style="left:389.60px;top:84.99px;font-size:9.10px;line-height:9.10px;font-weight:normal;color:#444444;transform:scaleX(0.982);">Merge &amp; Center</span>
<span class="t" style="left:346.20px;top:107.89px;font-size:9.10px;line-height:9.10px;font-weight:normal;color:#5e5e5e;transform:scaleX(0.991);">Alignment</span>
<span class="t" style="left:476.75px;top:61.79px;font-size:9.10px;line-height:9.10px;font-weight:normal;color:#444444;transform:scaleX(0.925);">General</span>
<span class="t" style="left:480.20px;top:84.31px;font-size:10.50px;line-height:10.50px;font-weight:normal;color:#555;transform:scaleX(1.131);">$</span>
<span class="t" style="left:503.90px;top:84.36px;font-size:10.20px;line-height:10.20px;font-weight:normal;color:#555;transform:scaleX(1.026);">%</span>
<span class="t" style="left:522.50px;top:80.29px;font-size:13.00px;line-height:13.00px;font-weight:bold;color:#555;transform:scaleX(1.079);">,</span>
<span class="t" style="left:545.30px;top:83.01px;font-size:6.60px;line-height:6.60px;font-weight:normal;color:#444;transform:scaleX(1.417);">.0</span>
<span class="t" style="left:543.00px;top:88.21px;font-size:6.60px;line-height:6.60px;font-weight:normal;color:#444;transform:scaleX(1.101);">.00</span>
<span class="t" style="left:559.00px;top:83.01px;font-size:6.60px;line-height:6.60px;font-weight:normal;color:#444;transform:scaleX(1.112);">.00</span>
<span class="t" style="left:563.50px;top:88.21px;font-size:6.60px;line-height:6.60px;font-weight:normal;color:#444;transform:scaleX(1.036);">.0</span>
<span class="t" style="left:503.00px;top:107.89px;font-size:9.10px;line-height:9.10px;font-weight:normal;color:#5e5e5e;transform:scaleX(0.927);">Number</span>
<span class="t" style="left:583.60px;top:81.29px;font-size:9.10px;line-height:9.10px;font-weight:normal;color:#444444;transform:scaleX(1.006);">Conditional</span>
<span class="t" style="left:581.50px;top:93.59px;font-size:9.10px;line-height:9.10px;font-weight:normal;color:#444444;transform:scaleX(1.028);">Formatting</span>
<span class="t" style="left:635.50px;top:81.29px;font-size:9.10px;line-height:9.10px;font-weight:normal;color:#444444;transform:scaleX(0.935);">Format as</span>
<span class="t" style="left:641.70px;top:93.59px;font-size:9.10px;line-height:9.10px;font-weight:normal;color:#444444;transform:scaleX(0.979);">Table</span>
<span class="t" style="left:684.50px;top:81.29px;font-size:9.10px;line-height:9.10px;font-weight:normal;color:#444444;transform:scaleX(0.931);">Cell</span>
<span class="t" style="left:677.60px;top:93.59px;font-size:9.10px;line-height:9.10px;font-weight:normal;color:#444444;transform:scaleX(0.956);">Styles</span>
<span class="t" style="left:632.80px;top:107.89px;font-size:9.10px;line-height:9.10px;font-weight:normal;color:#5e5e5e;transform:scaleX(0.856);">Styles</span>
<span class="t" style="left:719.50px;top:81.39px;font-size:9.10px;line-height:9.10px;font-weight:normal;color:#444444;transform:scaleX(0.945);">Insert</span>
<span class="t" style="left:750.00px;top:81.39px;font-size:9.10px;line-height:9.10px;font-weight:normal;color:#444444;transform:scaleX(0.920);">Delete</span>
<span class="t" style="left:779.70px;top:81.39px;font-size:9.10px;line-height:9.10px;font-weight:normal;color:#444444;transform:scaleX(0.982);">Format</span>
<span class="t" style="left:754.00px;top:107.89px;font-size:9.10px;line-height:9.10px;font-weight:normal;color:#5e5e5e;transform:scaleX(0.850);">Cells</span>
<span class="t" style="left:834.00px;top:55.99px;font-size:9.10px;line-height:9.10px;font-weight:normal;color:#444444;transform:scaleX(0.986);">AutoSum</span>
<span class="t" style="left:834.00px;top:73.09px;font-size:9.10px;line-height:9.10px;font-weight:normal;color:#444444;">Fill</span>
<span class="t" style="left:834.00px;top:89.99px;font-size:9.10px;line-height:9.10px;font-weight:normal;color:#444444;transform:scaleX(0.966);">Clear</span>
<span class="t" style="left:889.30px;top:81.29px;font-size:9.10px;line-height:9.10px;font-weight:normal;color:#444444;">Sort &amp;</span>
<span class="t" style="left:889.30px;top:93.59px;font-size:9.10px;line-height:9.10px;font-weight:normal;color:#444444;transform:scaleX(1.014);">Filter</span>
<span class="t" style="left:920.70px;top:81.29px;font-size:9.10px;line-height:9.10px;font-weight:normal;color:#444444;transform:scaleX(1.019);">Find &amp;</span>
<span class="t" style="left:919.20px;top:93.59px;font-size:9.10px;line-height:9.10px;font-weight:normal;color:#444444;transform:scaleX(0.941);">Select</span>
<span class="t" style="left:869.90px;top:107.89px;font-size:9.10px;line-height:9.10px;font-weight:normal;color:#5e5e5e;transform:scaleX(0.983);">Editing</span>
<svg class="r" style="left:0;top:0" width="1024" height="160" viewBox="0 0 1024 160"><rect x="4.4" y="126.1" width="75.2" height="19.4" fill="#fff" stroke="#c6c6c6" stroke-width="0.9"/><path d="M70.2 134.2 H75.2 L72.7 137 Z" fill="#666"/><circle cx="91.3" cy="132.3" r="0.55" fill="#888"/><circle cx="91.3" cy="135.8" r="0.55" fill="#888"/><circle cx="91.3" cy="139.3" r="0.55" fill="#888"/><rect x="103.1" y="126.25" width="81.6" height="19.2" fill="#fff" stroke="#c6c6c6" stroke-width="0.9"/><path d="M113 132.6 L121 139.6 M121 132.6 L113 139.6" stroke="#b5b5b5" stroke-width="1"/><path d="M139.3 136 L143 139.6 L149 132.8" fill="none" stroke="#c4c4c4" stroke-width="1.2"/><rect x="187.6" y="126.4" width="832" height="19" fill="#fff" stroke="#c6c6c6" stroke-width="0.9"/><path d="M1011.2 133.6 L1014 136.4 L1016.8 133.6" fill="none" stroke="#555" stroke-width="1"/></svg>
<span class="t" style="left:8.75px;top:132.52px;font-size:9.30px;line-height:9.30px;font-weight:normal;color:#333;transform:scaleX(0.942);">J2</span>
<span class="t" style="left:166.60px;top:130.68px;font-size:11.00px;line-height:11.00px;font-weight:normal;color:#333;transform:scaleX(1.591);font-style:italic;font-family:'Liberation Serif',serif;">f</span>
<span class="t" style="left:170.60px;top:132.20px;font-size:8.50px;line-height:8.50px;font-weight:normal;color:#333;transform:scaleX(1.129);font-style:italic;font-family:'Liberation Serif',serif;">x</span>
<svg class="r" style="left:0;top:0" width="1024" height="576" viewBox="0 0 1024 576"><rect x="1007.25" y="153.2" width="16.75" height="355.3" fill="#e6e6e6"/><rect x="1010.4" y="166.4" width="11.5" height="342" fill="#dadada"/><rect x="1011" y="154.6" width="10.7" height="10.4" fill="#fff" stroke="#c8c8c8" stroke-width="0.7"/><path d="M1013.8 161.3 H1018.8 L1016.3 158.5 Z" fill="#555"/><rect x="1010.8" y="166.6" width="10.8" height="86.6" rx="1" fill="#fff" stroke="#ababab" stroke-width="0.9"/><rect x="1010.9" y="498.5" width="10.5" height="10" fill="#fff" stroke="#c8c8c8" stroke-width="0.7"/><path d="M1013.8 502 H1018.8 L1016.3 504.8 Z" fill="#555"/><rect x="0" y="508.5" width="1024" height="20.9" fill="#e6e6e6"/><rect x="0" y="508.1" width="1024" height="0.9" fill="#c6c6c6"/><path d="M23 516.5 V520.5 L20.2 518.5 Z" fill="#b8b8b8"/><path d="M42.2 516.5 V520.5 L45 518.5 Z" fill="#b8b8b8"/><rect x="75" y="508.3" width="49.4" height="18.6" fill="#fff"/><rect x="74.6" y="508.3" width="0.8" height="18" fill="#c6c6c6"/><rect x="124.2" y="508.3" width="0.8" height="18" fill="#c6c6c6"/><rect x="75" y="525.6" width="49.4" height="1.3" fill="#217346"/><rect x="172.2" y="511" width="1" height="15" fill="#a8a8a8"/><rect x="220" y="511" width="1" height="15" fill="#a8a8a8"/><circle cx="251.8" cy="518.8" r="5.6" fill="none" stroke="#777" stroke-width="1"/><path d="M248.6 518.8 H255 M251.8 515.6 V522" stroke="#666" stroke-width="1.3"/><circle cx="614.6" cy="516" r="0.6" fill="#999"/><circle cx="614.6" cy="518.8" r="0.6" fill="#999"/><circle cx="614.6" cy="521.6" r="0.6" fill="#999"/><rect x="627.2" y="514.2" width="370" height="10.2" fill="#dadada"/><rect x="627.4" y="514.2" width="10.2" height="10.2" fill="#fff" stroke="#c8c8c8" stroke-width="0.7"/><path d="M634.3 516.6 V521.8 L631 519.2 Z" fill="#555"/><rect x="637.6" y="514.4" width="333" height="10" fill="#fff" stroke="#ababab" stroke-width="0.9"/><rect x="997.5" y="514.2" width="10.1" height="10.2" fill="#fff" stroke="#c8c8c8" stroke-width="0.7"/><path d="M1001 516.6 V521.8 L1004.3 519.2 Z" fill="#555"/><rect x="0" y="529.4" width="1024" height="16.6" fill="#f1f1f1"/><rect x="0" y="529.1" width="1024" height="0.8" fill="#d2d2d2"/><rect x="805" y="529.8" width="28.75" height="15.6" fill="#d4d4d4"/><rect x="814" y="532.5" width="9.8" height="9.3" fill="none" stroke="#666" stroke-width="0.9"/><path d="M817.3 532.5 V541.8 M820.6 532.5 V541.8 M814 535.6 H823.8 M814 538.7 H823.8" stroke="#666" stroke-width="0.8"/><rect x="842.8" y="532.4" width="10" height="9.6" fill="none" stroke="#777" stroke-width="0.9"/><rect x="845.3" y="534.6" width="5" height="5.2" fill="none" stroke="#777" stroke-width="0.8"/><path d="M846.5 537.2 H849" stroke="#777" stroke-width="0.8"/><path d="M871.3 532.4 V542 H881.6 V532.4 M874.8 532.4 V537.8 H878.2 V532.4" fill="none" stroke="#777" stroke-width="0.9"/><rect x="894" y="537.1" width="5" height="1" fill="#555"/><rect x="902" y="537.1" width="74.6" height="0.8" fill="#9a9a9a"/><rect x="937.9" y="533" width="3.1" height="8.3" fill="#6a6a6a"/><path d="M979.8 537.6 H986 M982.9 534.5 V540.7" stroke="#555" stroke-width="1.1"/><rect x="0" y="546" width="1024" height="30" fill="#050505"/><rect x="36" y="546" width="258" height="30" fill="#333333"/><path d="M12.2 555.6 L17.6 554.8 V560.3 H12.2 Z M18.4 554.7 L24.2 553.9 V560.3 H18.4 Z M12.2 561.1 H17.6 V566.6 L12.2 565.8 Z M18.4 561.1 H24.2 V567.5 L18.4 566.7 Z" fill="#fff"/><circle cx="51" cy="560.9" r="7.3" fill="none" stroke="#fff" stroke-width="1.6"/><rect x="276.6" y="555.3" width="4" height="8" rx="2" fill="none" stroke="#9a9a9a" stroke-width="1"/><path d="M274.2 561 Q274.2 565.6 278.6 565.6 Q283 565.6 283 561 M278.6 565.6 V567" fill="none" stroke="#9a9a9a" stroke-width="0.9"/><rect x="306" y="555.8" width="11.5" height="10" fill="none" stroke="#fff" stroke-width="1"/><path d="M306 557.5 H304 V564.2 H306 M317.5 557.5 H319.5 V564.2 H317.5" fill="none" stroke="#fff" stroke-width="0.9"/><rect x="334.3" y="555.5" width="0.9" height="11.5" fill="#555"/><rect x="336.6" y="555.5" width="0.9" height="11.5" fill="#555"/><path d="M393.8 555.3 H399.5 L401 556.8 H409.6 V567.3 H393.8 Z" fill="#f3d274"/><rect x="393.8" y="558.5" width="15.8" height="8.8" fill="#f7dc8a"/><path d="M396.5 567.3 V562.5 H407 V567.3 H404.6 V564.8 H398.9 V567.3 Z" fill="#1e90e0"/><path d="M430 557 H446 V569 H430 Z" fill="#fff"/><path d="M434.2 557 V554.8 Q434.2 552.5 438 552.5 Q441.8 552.5 441.8 554.8 V557" fill="none" stroke="#fff" stroke-width="1.1"/><path d="M434 559.3 H437.5 V562.8 H434 Z M438.5 559.3 H442 V562.8 H438.5 Z M434 563.8 H437.5 V567.3 H434 Z M438.5 563.8 H442 V567.3 H438.5 Z" fill="#111"/><rect x="465.7" y="552.2" width="18" height="17.1" rx="2" fill="#2f3843"/><path d="M469.5 566.3 Q474.7 568.6 480.3 566" fill="none" stroke="#f4a21e" stroke-width="1"/><rect x="503.2" y="552.2" width="18" height="17.1" fill="#f2ea94"/><rect x="503.2" y="552.2" width="18" height="3.6" fill="#5c1a2e"/><path d="M503.2 558.5 H521.2 M503.2 561.2 H521.2 M503.2 563.9 H521.2 M503.2 566.6 H521.2" stroke="#d9cf6a" stroke-width="0.6"/><circle cx="548.5" cy="560.7" r="8.3" fill="#db4437"/><path d="M548.5 560.7 L541.3 556.55 A8.3 8.3 0 0 0 544.35 567.9 Z" fill="#0f9d58"/><path d="M548.5 560.7 L544.35 567.9 A8.3 8.3 0 0 0 556.8 560.7 Z" fill="#ffcd40"/><circle cx="548.5" cy="560.7" r="3.9" fill="#fff"/><circle cx="548.5" cy="560.7" r="3" fill="#4285f4"/><rect x="583" y="553.8" width="10.8" height="14" fill="#fff"/><path d="M585 557 H592 M585 559.5 H592 M585 562 H592 M585 564.5 H592" stroke="#2b579a" stroke-width="1"/><path d="M576.5 554.3 L587 552.2 V569.3 L576.5 567.3 Z" fill="#2b579a"/><rect x="604.4" y="546" width="35.4" height="30" fill="#3c3c3c"/><rect x="620" y="553.8" width="10.8" height="14" fill="#fff"/><path d="M622 557 H630 M622 559.8 H630 M622 562.6 H630 M622 565.4 H630 M625.5 554 V567.5" stroke="#217346" stroke-width="0.9"/><path d="M613.4 554.3 L624 552.2 V569.3 L613.4 567.3 Z" fill="#1e7145"/><rect x="534" y="574" width="29.4" height="2" fill="#8888dd"/><rect x="570.7" y="574" width="29.8" height="2" fill="#8888dd"/><rect x="604.4" y="574" width="35.4" height="2" fill="#8888dd"/><path d="M869 563 L873.5 558.3 L878 563" fill="none" stroke="#fff" stroke-width="1"/><rect x="886.3" y="558.7" width="10.4" height="5.6" fill="none" stroke="#fff" stroke-width="1"/><rect x="887.6" y="560" width="5.2" height="3" fill="#fff"/><path d="M905.3 565.5 A10 10 0 0 1 915.3 555.8 M907.8 565.5 A7.5 7.5 0 0 1 915.3 558.3 M910.3 565.5 A5 5 0 0 1 915.3 560.8" fill="none" stroke="#fff" stroke-width="0.9"/><circle cx="914" cy="564.5" r="1.2" fill="#fff"/><path d="M921.5 559.3 H924 L927.6 556.3 V565.6 L924 562.6 H921.5 Z" fill="none" stroke="#fff" stroke-width="0.9"/><path d="M929.3 558.8 Q930.8 561 929.3 563.2 M931.3 557.3 Q933.6 561 931.3 564.7" fill="none" stroke="#fff" stroke-width="0.8"/><path d="M993.3 555.3 H1005 V563 H999 L996.5 565.3 V563 H993.3 Z" fill="#fff"/><path d="M995.3 557.6 H1003 M995.3 559.6 H1003 M995.3 561.4 H1000" stroke="#111" stroke-width="0.7"/><circle cx="1004.4" cy="566.6" r="6" fill="#222" stroke="#bbb" stroke-width="0.9"/><rect x="1020" y="546" width="0.8" height="30" fill="#5a5a5a"/></svg>
<span class="t" style="left:84.00px;top:513.77px;font-size:9.60px;line-height:9.60px;font-weight:bold;color:#217346;transform:scaleX(0.953);">Sheet1</span>
<span class="t" style="left:133.75px;top:513.97px;font-size:9.60px;line-height:9.60px;font-weight:normal;color:#444;transform:scaleX(0.945);">Sheet2</span>
<span class="t" style="left:182.50px;top:513.97px;font-size:9.60px;line-height:9.60px;font-weight:normal;color:#444;transform:scaleX(0.950);">Sheet3</span>
<span class="t" style="left:5.60px;top:534.18px;font-size:9.00px;line-height:9.00px;font-weight:normal;color:#444;transform:scaleX(0.890);">Ready</span>
<span class="t" style="left:997.90px;top:534.18px;font-size:9.00px;line-height:9.00px;font-weight:normal;color:#444;transform:scaleX(0.830);">100%</span>
<span class="t" style="left:66.40px;top:556.31px;font-size:11.20px;line-height:11.20px;font-weight:normal;color:#c8c8c8;transform:scaleX(0.961);">Type here to search</span>
<span class="t" style="left:357.70px;top:545.45px;font-size:28.40px;line-height:28.40px;font-weight:bold;color:#1b8ce3;transform:scaleX(0.956);">e</span>
<span class="t" style="left:470.80px;top:553.79px;font-size:13.00px;line-height:13.00px;font-weight:bold;color:#fff;transform:scaleX(1.066);">a</span>
<span class="t" style="left:577.60px;top:557.95px;font-size:8.20px;line-height:8.20px;font-weight:bold;color:#fff;transform:scaleX(1.059);">W</span>
<span class="t" style="left:615.00px;top:557.95px;font-size:8.20px;line-height:8.20px;font-weight:bold;color:#fff;transform:scaleX(1.280);">X</span>
<span class="t" style="left:942.50px;top:550.28px;font-size:9.00px;line-height:9.00px;font-weight:normal;color:#fff;transform:scaleX(0.927);">12:53 PM</span>
<span class="t" style="left:939.00px;top:564.48px;font-size:9.00px;line-height:9.00px;font-weight:normal;color:#fff;transform:scaleX(0.955);">10/26/2017</span>
<span class="t" style="left:1002.10px;top:563.62px;font-size:8.00px;line-height:8.00px;font-weight:bold;color:#fff;transform:scaleX(1.034);">2</span>
</body></html>
